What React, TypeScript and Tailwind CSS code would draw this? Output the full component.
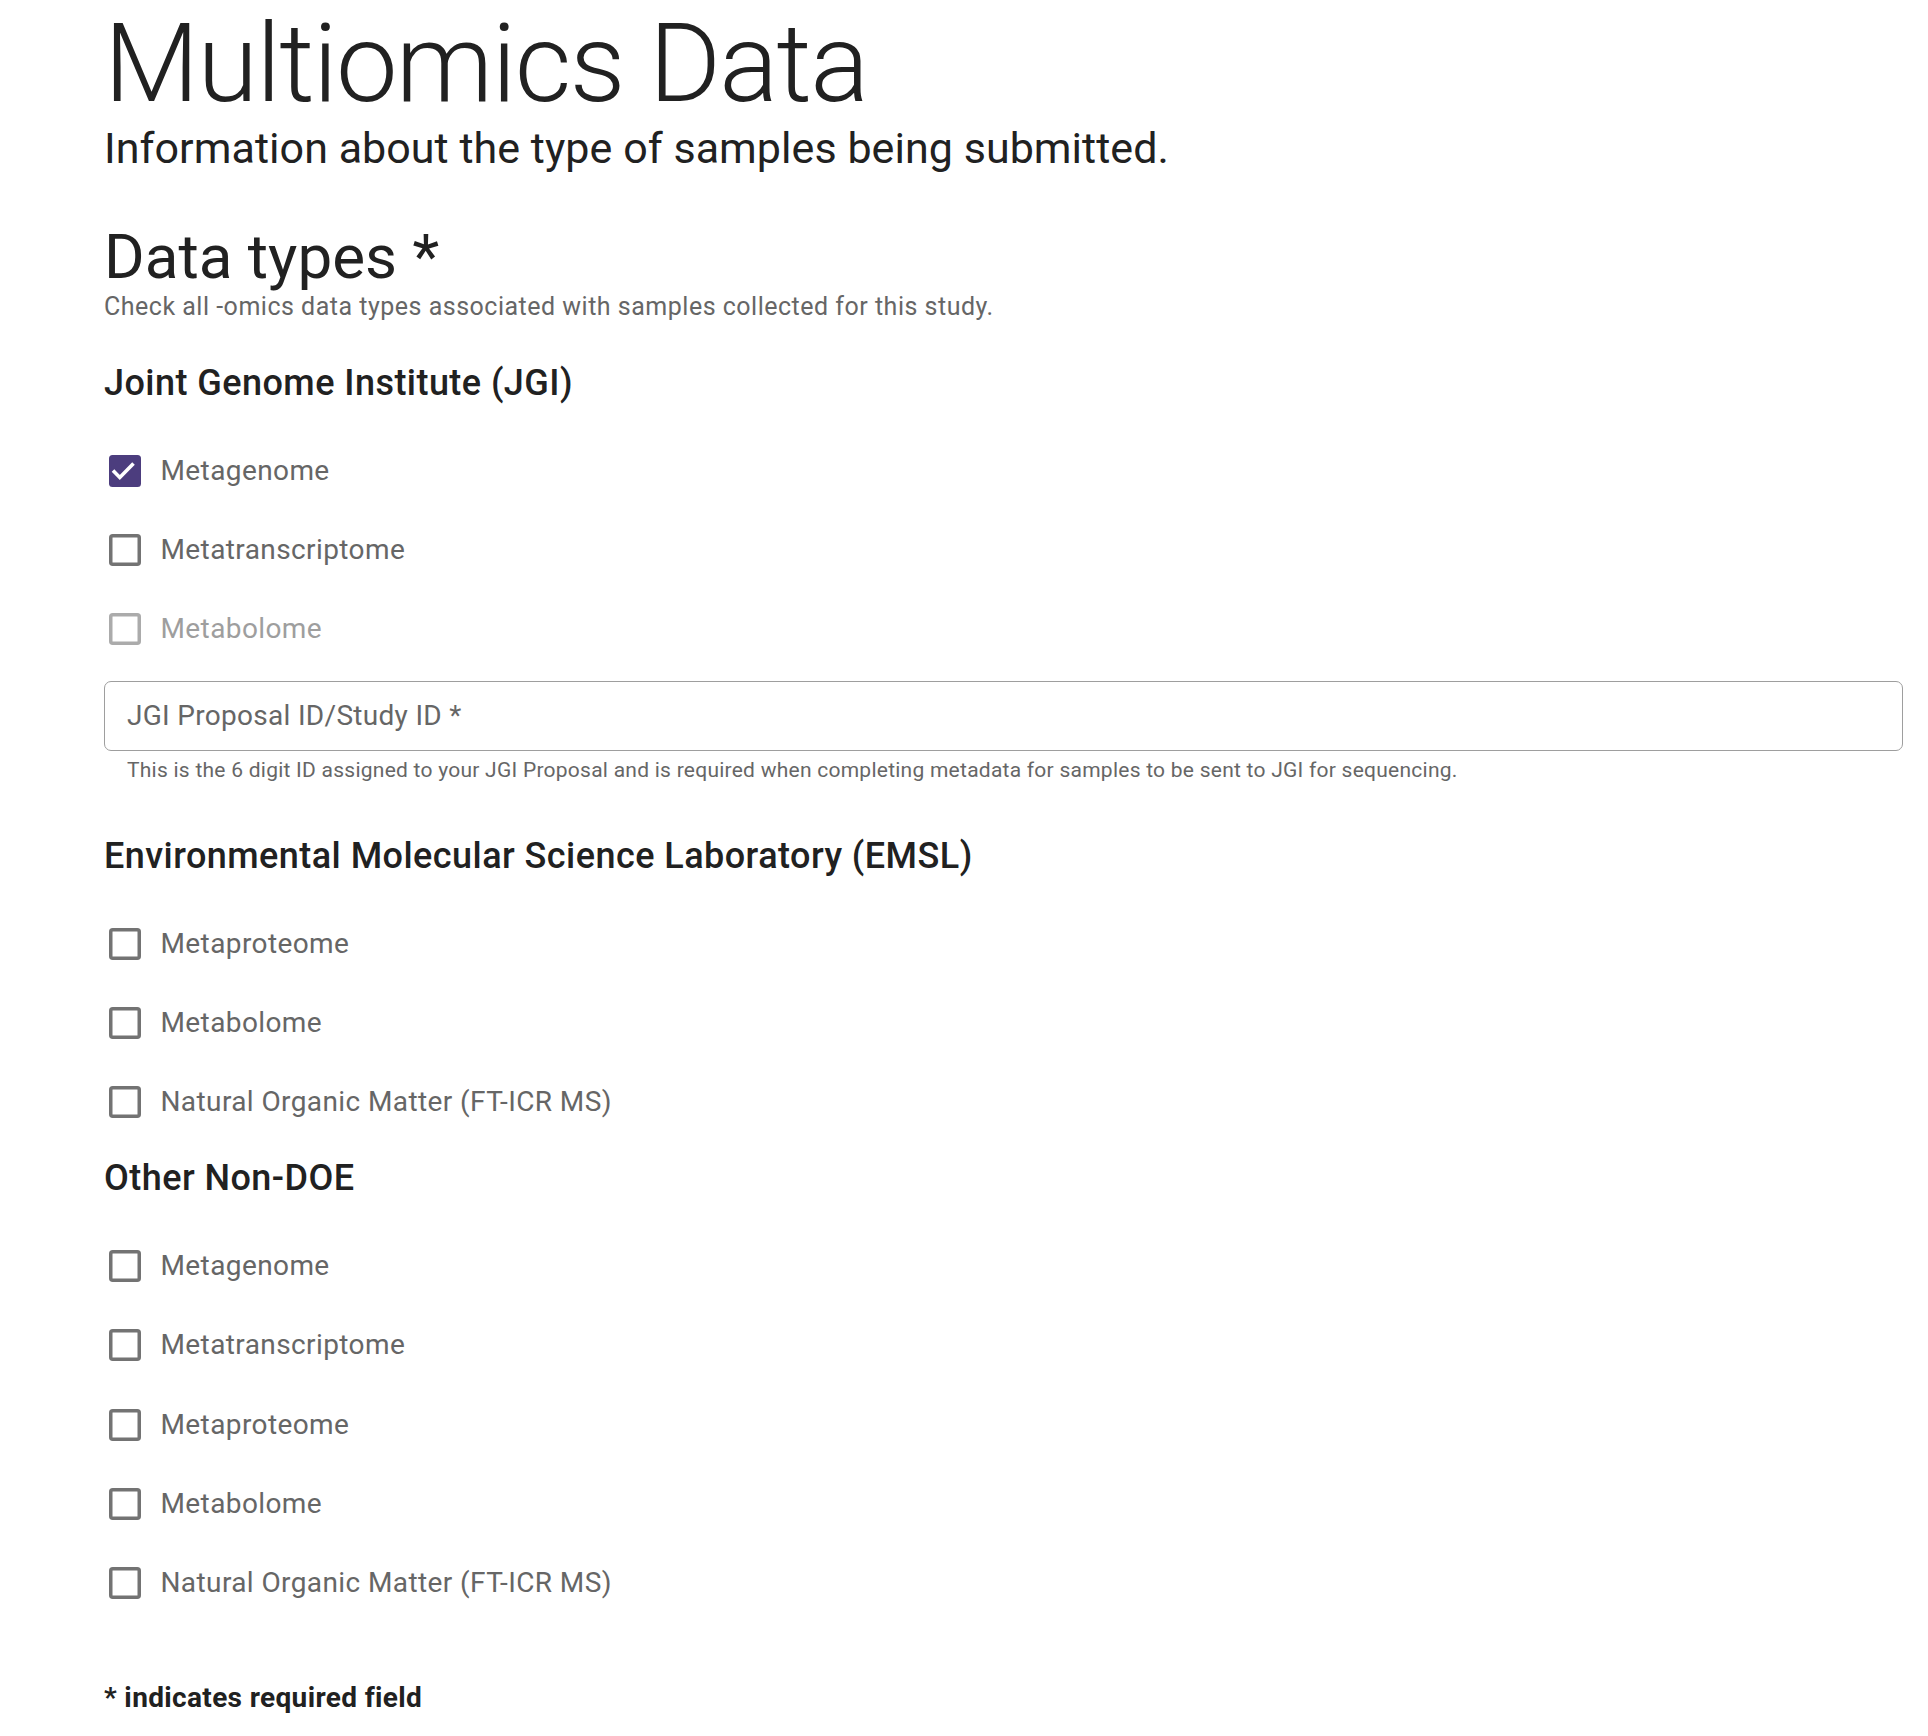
import React from "react";

type Item = { label: string; checked?: boolean; disabled?: boolean };

function Box({ checked, disabled }: { checked?: boolean; disabled?: boolean }) {
  if (checked) {
    return (
      <svg viewBox="0 0 42 42" className="w-[42px] h-[42px] shrink-0">
        <rect x="5" y="5" width="32" height="32" rx="3.5" fill="#4c3d7e" />
        <polyline
          points="9,20.5 15.8,27.5 29.5,13.5"
          fill="none"
          stroke="#ffffff"
          strokeWidth="3.6"
          strokeLinecap="butt"
          strokeLinejoin="miter"
        />
      </svg>
    );
  }
  const c = disabled ? "#ababab" : "#737373";
  return (
    <svg viewBox="0 0 42 42" className="w-[42px] h-[42px] shrink-0">
      <rect x="6.75" y="6.75" width="28.5" height="28.5" rx="2" fill="none" stroke={c} strokeWidth="3.5" />
    </svg>
  );
}

function Row({ item }: { item: Item }) {
  return (
    <div className="flex items-center h-[79.3px]">
      <Box checked={item.checked} disabled={item.disabled} />
      <span
        className={
          "ml-[14.5px] text-[28px] leading-[42px] tracking-[0.4px] " +
          (item.disabled ? "text-[#9e9e9e]" : "text-[#666666]")
        }
      >
        {item.label}
      </span>
    </div>
  );
}

function Section({ title, items, className }: { title: string; items: Item[]; className: string }) {
  return (
    <div className={className}>
      <h3 className="text-[36px] leading-[40px] font-medium tracking-[0.45px] text-[#212121]">{title}</h3>
      <div className="mt-[28px] flex flex-col">
        {items.map((it, i) => (
          <Row key={i} item={it} />
        ))}
      </div>
    </div>
  );
}

export default function App() {
  return (
    <div className="min-h-[1736px] bg-white pl-[104px] pr-[25px] pt-[8px] font-['Roboto','Liberation_Sans',sans-serif] antialiased">
      <h1 className="font-['Roboto_Light','Roboto','Liberation_Sans',sans-serif] text-[110px] leading-[112px] font-light tracking-[-1.7px] text-[#212121]">
        Multiomics Data
      </h1>
      <p className="mt-[4px] text-[43px] leading-[48px] tracking-[0.05px] text-[#212121]">
        Information about the type of samples being submitted.
      </p>
      <h2 className="mt-[49px] text-[62px] leading-[72px] text-[#212121]">Data types *</h2>
      <p className="text-[25px] leading-[28px] tracking-[0.5px] text-[#666666]">
        Check all -omics data types associated with samples collected for this study.
      </p>

      <Section
        className="mt-[42px]"
        title="Joint Genome Institute (JGI)"
        items={[
          { label: "Metagenome", checked: true },
          { label: "Metatranscriptome" },
          { label: "Metabolome", disabled: true },
        ]}
      />

      <div className="mt-[12px] h-[70px] border border-[#9e9e9e] rounded-[7px] flex items-center pl-[22px]">
        <span className="text-[28px] tracking-[0.3px] text-[#666666]">JGI Proposal ID/Study ID *</span>
      </div>
      <p className="mt-[7px] pl-[23px] text-[21px] leading-[24px] tracking-[0.25px] text-[#666666]">
        This is the 6 digit ID assigned to your JGI Proposal and is required when completing metadata for samples to
        be sent to JGI for sequencing.
      </p>

      <Section
        className="mt-[54px]"
        title="Environmental Molecular Science Laboratory (EMSL)"
        items={[{ label: "Metaproteome" }, { label: "Metabolome" }, { label: "Natural Organic Matter (FT-ICR MS)" }]}
      />

      <Section
        className="mt-[16.5px]"
        title="Other Non-DOE"
        items={[
          { label: "Metagenome" },
          { label: "Metatranscriptome" },
          { label: "Metaproteome" },
          { label: "Metabolome" },
          { label: "Natural Organic Matter (FT-ICR MS)" },
        ]}
      />

      <p className="mt-[59px] text-[28px] leading-[32px] font-bold tracking-[0.35px] text-[#212121]">
        * indicates required field
      </p>
    </div>
  );
}
